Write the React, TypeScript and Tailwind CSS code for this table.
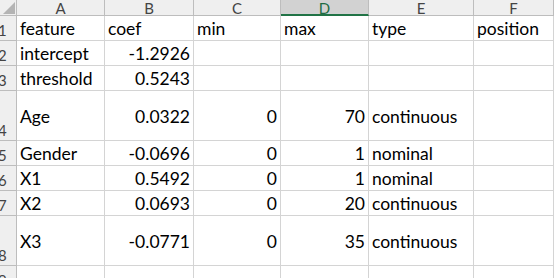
import React from "react";

const font = { fontFamily: "Lato, 'Liberation Sans', sans-serif" };

type Row = { n: number; h: "s" | "l"; cells: (string | number)[] };

const rows: Row[] = [
  { n: 1, h: "s", cells: ["feature", "coef", "min", "max", "type", "position"] },
  { n: 2, h: "s", cells: ["intercept", -1.2926, "", "", "", ""] },
  { n: 3, h: "s", cells: ["threshold", 0.5243, "", "", "", ""] },
  { n: 4, h: "l", cells: ["Age", 0.0322, 0, 70, "continuous", ""] },
  { n: 5, h: "s", cells: ["Gender", -0.0696, 0, 1, "nominal", ""] },
  { n: 6, h: "s", cells: ["X1", 0.5492, 0, 1, "nominal", ""] },
  { n: 7, h: "s", cells: ["X2", 0.0693, 0, 20, "continuous", ""] },
  { n: 8, h: "l", cells: ["X3", -0.0771, 0, 35, "continuous", ""] },
];

const colW = [
  "w-[88px]",
  "w-[89px]",
  "w-[87px]",
  "w-[88px]",
  "w-[105px]",
  "flex-1",
];

const fmt = (v: string | number) => {
  if (typeof v === "number") {
    if (Number.isInteger(v)) return String(v);
    return v.toFixed(4);
  }
  return v;
};

function Cell({ v, i }: { v: string | number; i: number }) {
  const num = typeof v === "number";
  return (
    <div
      className={`${colW[i]} shrink-0 h-full box-border border-r border-b border-[#d4d4d4] flex items-center ${
        num ? "justify-end pr-[3px]" : "justify-start pl-[3px]"
      } text-[17.5px] text-black leading-[20px] pt-[2px] overflow-hidden whitespace-nowrap`}
    >
      {fmt(v)}
    </div>
  );
}

function RowHeader({ n }: { n: number | string }) {
  return (
    <div className="w-[17px] shrink-0 h-full box-border border-r border-b border-[#bdbdbd] bg-[#efefef] flex items-end overflow-hidden">
      <span className="ml-[-2px] text-[15px] leading-[15px] pb-[2px] text-[#444444]">{n}</span>
    </div>
  );
}

export default function App() {
  const letters = ["A", "B", "C", "D", "E", "F"];
  return (
    <div className="w-[554px] h-[278px] overflow-hidden bg-white flex flex-col" style={font}>
      <div className="flex h-[16px] shrink-0">
        <div className="w-[17px] shrink-0 h-full box-border border-r border-b border-[#bdbdbd] bg-[#efefef] relative">
          <svg className="absolute right-[1px] bottom-[1px]" width="12" height="12" viewBox="0 0 12 12">
            <polygon points="12,0 12,12 0,12" fill="#b4b4b4" />
          </svg>
        </div>
        {letters.map((l, i) =>
          l === "D" ? (
            <div
              key={l}
              className={`${colW[i]} shrink-0 h-full box-border border-r border-[#bdbdbd] border-b-2 border-b-[#217346] bg-[#d2d2d2] flex items-center justify-center text-[15px] leading-[14px] text-[#1e6b42] pt-[1px]`}
            >
              {l}
            </div>
          ) : (
            <div
              key={l}
              className={`${colW[i]} shrink-0 h-full box-border border-r border-b border-[#bdbdbd] bg-[#efefef] flex items-center justify-center text-[15px] leading-[14px] text-[#444444] pt-[1px]`}
            >
              {l}
            </div>
          )
        )}
      </div>
      {rows.map((r) => (
        <div key={r.n} className={`flex shrink-0 ${r.h === "l" ? "h-[50px]" : "h-[25px]"}`}>
          <RowHeader n={r.n} />
          {r.cells.map((c, i) => (
            <Cell key={i} v={c} i={i} />
          ))}
        </div>
      ))}
      <div className="flex shrink-0 h-[25px]">
        <RowHeader n={9} />
        {colW.map((_, i) => (
          <Cell key={i} v="" i={i} />
        ))}
      </div>
    </div>
  );
}
